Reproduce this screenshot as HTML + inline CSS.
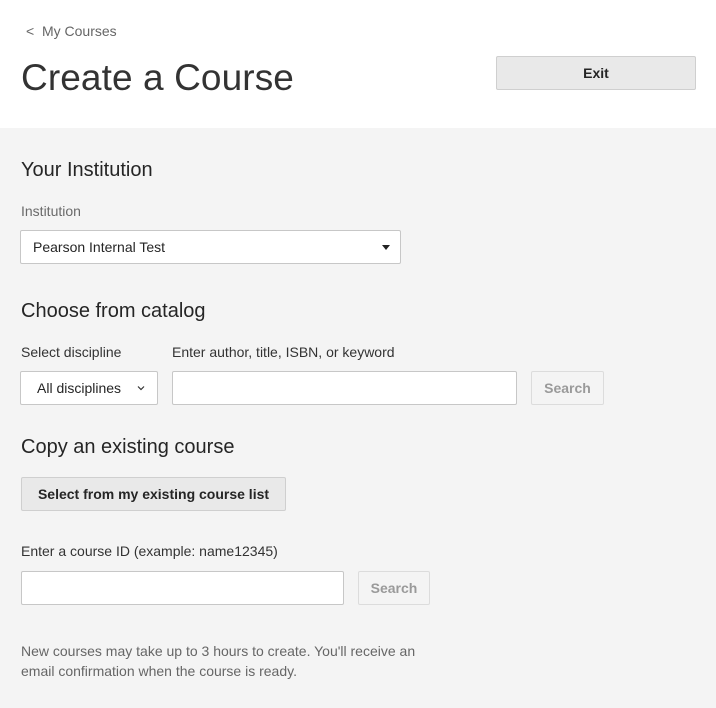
<!DOCTYPE html>
<html><head><style>
html,body{margin:0;padding:0}
body{width:716px;height:708px;background:#fff;font-family:"Liberation Sans",sans-serif;color:#252525;position:relative;overflow:hidden}
.a{position:absolute;white-space:nowrap}
.box{position:absolute;box-sizing:border-box;background:#fff;border:1px solid #c7c7c7;border-radius:2px}
.btn{position:absolute;box-sizing:border-box;border:1px solid #cfcfcf;border-radius:2px;font-weight:bold;font-size:14px;display:flex;align-items:center;justify-content:center}
h2{margin:0;font-weight:normal;font-size:20px;position:absolute;white-space:nowrap;color:#252525}
.lbl{font-size:14px;color:#333}
</style></head><body>
<div class="a" style="left:26px;top:23px;font-size:14px;color:#666">&lt;&nbsp; My Courses</div>
<div class="a" style="left:21px;top:57px;font-size:37px;font-weight:300;color:#333;letter-spacing:0.1px">Create a Course</div>
<div class="btn" style="left:496px;top:56px;width:200px;height:34px;background:#e9e9e9;color:#252525">Exit</div>
<div style="position:absolute;left:0;top:128px;width:716px;height:580px;background:#f4f4f4"></div>
<h2 style="left:21px;top:159px">Your Institution</h2>
<div class="a lbl" style="left:21px;top:203px;color:#6a6a6a">Institution</div>
<div class="box" style="left:20px;top:230px;width:381px;height:34px"></div>
<div class="a" style="left:33px;top:239px;font-size:14px">Pearson Internal Test</div>
<div class="a" style="left:382px;top:245px;width:0;height:0;border-left:4px solid transparent;border-right:4px solid transparent;border-top:5px solid #222"></div>
<h2 style="left:21px;top:300px">Choose from catalog</h2>
<div class="a lbl" style="left:21px;top:344px">Select discipline</div>
<div class="a lbl" style="left:172px;top:344px">Enter author, title, ISBN, or keyword</div>
<div class="box" style="left:20px;top:371px;width:138px;height:34px"></div>
<div class="a" style="left:37px;top:380px;font-size:14px">All disciplines</div>
<svg class="a" style="left:137px;top:385px" width="8" height="6"><path d="M1 1.5L4 4.5L7 1.5" fill="none" stroke="#333" stroke-width="1.2"/></svg>
<div class="box" style="left:172px;top:371px;width:345px;height:34px"></div>
<div class="btn" style="left:531px;top:371px;width:73px;height:34px;background:#f4f4f4;color:#9a9a9a;border-color:#dcdcdc">Search</div>
<h2 style="left:21px;top:436px">Copy an existing course</h2>
<div class="btn" style="left:21px;top:477px;width:265px;height:34px;background:#e9e9e9;color:#252525">Select from my existing course list</div>
<div class="a lbl" style="left:21px;top:543px">Enter a course ID (example: name12345)</div>
<div class="box" style="left:21px;top:571px;width:323px;height:34px"></div>
<div class="btn" style="left:358px;top:571px;width:72px;height:34px;background:#f4f4f4;color:#9a9a9a;border-color:#dcdcdc">Search</div>
<div class="a" style="left:21px;top:641px;font-size:14px;line-height:20px;color:#666">New courses may take up to 3 hours to create. You'll receive an<br>email confirmation when the course is ready.</div>
</body></html>
